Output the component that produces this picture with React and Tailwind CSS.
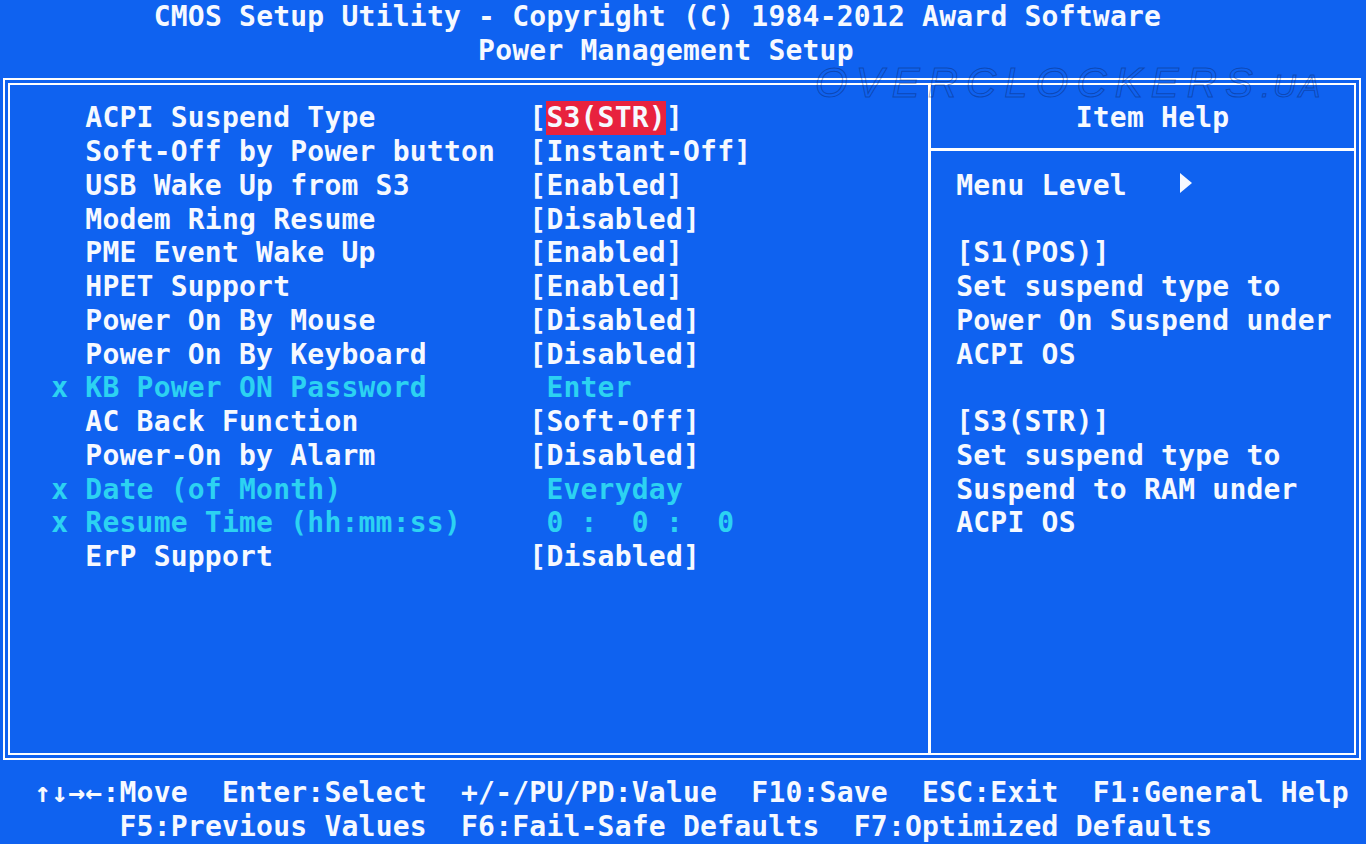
const ROW = "h-[33.76px] leading-[33.76px] whitespace-pre"

const settings = [
  { label: "ACPI Suspend Type", value: "S3(STR)", selected: true },
  { label: "Soft-Off by Power button", value: "[Instant-Off]" },
  { label: "USB Wake Up from S3", value: "[Enabled]" },
  { label: "Modem Ring Resume", value: "[Disabled]" },
  { label: "PME Event Wake Up", value: "[Enabled]" },
  { label: "HPET Support", value: "[Enabled]" },
  { label: "Power On By Mouse", value: "[Disabled]" },
  { label: "Power On By Keyboard", value: "[Disabled]" },
  { label: "KB Power ON Password", value: " Enter", locked: true },
  { label: "AC Back Function", value: "[Soft-Off]" },
  { label: "Power-On by Alarm", value: "[Disabled]" },
  { label: "Date (of Month)", value: " Everyday", locked: true },
  { label: "Resume Time (hh:mm:ss)", value: " 0 :  0 :  0", locked: true },
  { label: "ErP Support", value: "[Disabled]" },
]

const helpLines = [
  "",
  "[S1(POS)]",
  "Set suspend type to",
  "Power On Suspend under",
  "ACPI OS",
  "",
  "[S3(STR)]",
  "Set suspend type to",
  "Suspend to RAM under",
  "ACPI OS",
]

function SettingRow({ item }) {
  const prefix = (item.locked ? "x " : "  ") + item.label.padEnd(26)
  if (item.selected) {
    return (
      <div className={ROW}>
        {prefix}[
        <span className="inline-block h-[33.76px] bg-[#e8223e] align-top">{item.value}</span>]
      </div>
    )
  }
  return (
    <div className={`${ROW} ${item.locked ? "text-[#2cd2f2]" : ""}`}>
      {prefix}
      {item.value}
    </div>
  )
}

export default function App() {
  return (
    <div className="relative h-[844px] w-[1366px] overflow-hidden bg-[#0f62f0] font-['DejaVu_Sans_Mono',monospace] text-[28px] font-bold tracking-[0.218px] text-[#f6f9ff]">
      <div className={`${ROW} pl-[153.7px]`}>CMOS Setup Utility - Copyright (C) 1984-2012 Award Software</div>
      <div className={`${ROW} pl-[478.1px]`}>Power Management Setup</div>

      <div className="h-[708.96px] pl-[3px] pr-[5px] pt-[10.5px]">
        <div className="h-[681.5px] border-2 border-white p-[3px]">
          <div className="flex h-full border-2 border-white">
            <div className="w-[918px] pl-[41.2px] pt-[16.28px]">
              {settings.map((s) => (
                <SettingRow key={s.label} item={s} />
              ))}
            </div>
            <div className="w-[3px] bg-white" />
            <div className="flex flex-1 flex-col">
              <div className="h-[63px] pl-[144.7px] pt-[16.28px]">
                <div className={ROW}>Item Help</div>
              </div>
              <div className="h-[3px] bg-white" />
              <div className="pl-[25.2px] pt-[17.8px]">
                <div className={ROW}>
                  {"Menu Level   "}
                  <span className="inline-flex h-[33.76px] w-[17px] items-start pl-[1px] pt-[4px] align-top">
                    <svg width="13" height="20" viewBox="0 0 13 20">
                      <polygon points="1,0 13,10 1,20" fill="#f6f9ff" />
                    </svg>
                  </span>
                </div>
                {helpLines.map((line, i) => (
                  <div key={i} className={ROW}>
                    {line}
                  </div>
                ))}
              </div>
            </div>
          </div>
        </div>
      </div>

      <div className={`${ROW} pl-[34.15px]`}>
        {"↑↓→←:Move  Enter:Select  +/-/PU/PD:Value  F10:Save  ESC:Exit  F1:General Help"}
      </div>
      <div className={`${ROW} pl-[119.5px]`}>F5:Previous Values  F6:Fail-Safe Defaults  F7:Optimized Defaults</div>

      {/* watermark over the frame */}
      <div className="pointer-events-none absolute left-[815px] top-[67px] h-[32px] whitespace-pre font-['Liberation_Sans',sans-serif] text-[42px] font-normal italic leading-[32px] tracking-[8px] text-transparent [-webkit-text-stroke:1px_rgba(10,30,90,0.4)]">
        OVERCLOCKERS<span className="text-[32px] tracking-[3px]">.UA</span>
      </div>
    </div>
  )
}
